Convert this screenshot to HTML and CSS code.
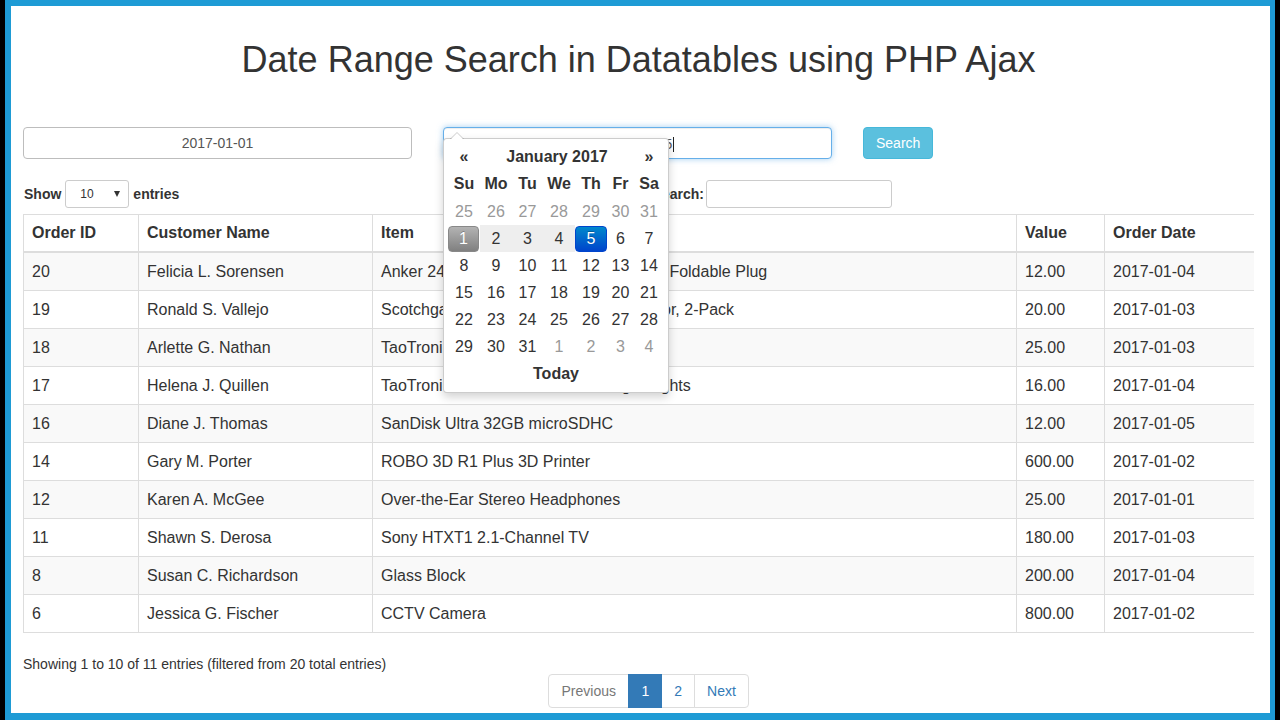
FILE: index.html
```html
<!DOCTYPE html>
<html lang="en">
<head>
<meta charset="utf-8">
<title>Date Range Search in Datatables using PHP Ajax</title>
<link rel="stylesheet" href="styles.css">
</head>
<body>
<div class="frame">
  <div class="page">
    <h1 class="title">Date Range Search in Datatables using PHP Ajax</h1>

    <div class="range-row">
      <input class="field" type="text" value="2017-01-01">
      <div class="picker-wrap">
        <div class="field field-focus"><span>2017-01-05</span><span class="caret"></span></div>
        <div class="datepicker">
          <table class="cal">
            <colgroup>
              <col class="c32"><col class="c32"><col class="c31"><col class="c32"><col class="c32"><col class="c27"><col class="c30">
            </colgroup>
            <thead>
              <tr class="cal-head">
                <th class="nav">«</th>
                <th colspan="5" class="month">January 2017</th>
                <th class="nav">»</th>
              </tr>
              <tr class="cal-dow">
                <th>Su</th><th>Mo</th><th>Tu</th><th>We</th><th>Th</th><th>Fr</th><th>Sa</th>
              </tr>
            </thead>
            <tbody>
              <tr><td class="old">25</td><td class="old">26</td><td class="old">27</td><td class="old">28</td><td class="old">29</td><td class="old">30</td><td class="old">31</td></tr>
              <tr><td class="sel"><span>1</span></td><td class="range">2</td><td class="range">3</td><td class="range">4</td><td class="active"><span>5</span></td><td>6</td><td>7</td></tr>
              <tr><td>8</td><td>9</td><td>10</td><td>11</td><td>12</td><td>13</td><td>14</td></tr>
              <tr><td>15</td><td>16</td><td>17</td><td>18</td><td>19</td><td>20</td><td>21</td></tr>
              <tr><td>22</td><td>23</td><td>24</td><td>25</td><td>26</td><td>27</td><td>28</td></tr>
              <tr><td>29</td><td>30</td><td>31</td><td class="old">1</td><td class="old">2</td><td class="old">3</td><td class="old">4</td></tr>
            </tbody>
            <tfoot>
              <tr class="cal-foot"><th colspan="7">Today</th></tr>
            </tfoot>
          </table>
        </div>
      </div>
      <button class="btn-search" type="button">Search</button>
    </div>

    <div class="dt-controls">
      <label class="dt-length">Show <span class="select"><span>10</span><span class="arrow"></span></span> entries</label>
      <label class="dt-filter">Search:<input class="filter-input" type="search"></label>
    </div>

    <table class="data">
      <colgroup>
        <col class="w-id"><col class="w-name"><col class="w-item"><col class="w-value"><col class="w-date">
      </colgroup>
      <thead>
        <tr><th>Order ID</th><th>Customer Name</th><th>Item</th><th>Value</th><th>Order Date</th></tr>
      </thead>
      <tbody>
        <tr><td>20</td><td>Felicia L. Sorensen</td><td>Anker 24W Dual USB Wall Charger with Foldable Plug</td><td>12.00</td><td>2017-01-04</td></tr>
        <tr><td>19</td><td>Ronald S. Vallejo</td><td>Scotchgard Fabric &amp; Upholstery Protector, 2-Pack</td><td>20.00</td><td>2017-01-03</td></tr>
        <tr><td>18</td><td>Arlette G. Nathan</td><td>TaoTronics Bluetooth Sport Headphones</td><td>25.00</td><td>2017-01-03</td></tr>
        <tr><td>17</td><td>Helena J. Quillen</td><td>TaoTronics Motion Sensor LED Night Lights</td><td>16.00</td><td>2017-01-04</td></tr>
        <tr><td>16</td><td>Diane J. Thomas</td><td>SanDisk Ultra 32GB microSDHC</td><td>12.00</td><td>2017-01-05</td></tr>
        <tr><td>14</td><td>Gary M. Porter</td><td>ROBO 3D R1 Plus 3D Printer</td><td>600.00</td><td>2017-01-02</td></tr>
        <tr><td>12</td><td>Karen A. McGee</td><td>Over-the-Ear Stereo Headphones</td><td>25.00</td><td>2017-01-01</td></tr>
        <tr><td>11</td><td>Shawn S. Derosa</td><td>Sony HTXT1 2.1-Channel TV</td><td>180.00</td><td>2017-01-03</td></tr>
        <tr><td>8</td><td>Susan C. Richardson</td><td>Glass Block</td><td>200.00</td><td>2017-01-04</td></tr>
        <tr><td>6</td><td>Jessica G. Fischer</td><td>CCTV Camera</td><td>800.00</td><td>2017-01-02</td></tr>
      </tbody>
    </table>

    <div class="dt-info">Showing 1 to 10 of 11 entries (filtered from 20 total entries)</div>

    <ul class="pagination">
      <li class="disabled"><a>Previous</a></li>
      <li class="current"><a>1</a></li>
      <li><a>2</a></li>
      <li><a>Next</a></li>
    </ul>
  </div>
</div>
</body>
</html>
```

FILE: styles.css
```css
html, body {
  margin: 0;
  padding: 0;
  background: #000;
}

body {
  font-family: "Liberation Sans", Arial, sans-serif;
  font-size: 14px;
  line-height: 20px;
  color: #333;
}

.frame {
  margin: 0 5px;
  width: 1270px;
  height: 720px;
  box-sizing: border-box;
  border-style: solid;
  border-color: #1e9bd5;
  border-width: 6px 5px 7px 6px;
  background: #fff;
  overflow: hidden;
}

.page {
  padding-top: 34px;
}

.title {
  margin: 0;
  padding-right: 4px;
  font-size: 36px;
  line-height: 40px;
  font-weight: normal;
  text-align: center;
  color: #333;
}

/* date range row */
.range-row {
  display: flex;
  gap: 31px;
  margin: 47px 0 0 12px;
}

.field {
  width: 389px;
  height: 32px;
  box-sizing: border-box;
  border: 1px solid #bdbdbd;
  border-radius: 4px;
  padding: 5px 12px;
  font-family: "Liberation Sans", Arial, sans-serif;
  font-size: 14px;
  line-height: 20px;
  color: #555;
  text-align: center;
  background: #fff;
}

.field-focus {
  border-color: #66afe9;
  box-shadow: inset 0 1px 1px rgba(0,0,0,.075), 0 0 6px rgba(102,175,233,.6);
  display: flex;
  justify-content: center;
  align-items: center;
  padding-top: 7px;
}

.caret {
  display: inline-block;
  width: 1px;
  height: 15px;
  background: #222;
  margin-left: 1px;
}

.picker-wrap {
  position: relative;
}

.btn-search {
  height: 32px;
  padding: 0 12px;
  border: 1px solid #46b8da;
  border-radius: 4px;
  background: #5bc0de;
  color: #fff;
  font-family: "Liberation Sans", Arial, sans-serif;
  font-size: 14px;
}

/* datepicker */
.datepicker {
  position: absolute;
  left: 0;
  top: 11px;
  z-index: 10;
  width: 226px;
  box-sizing: border-box;
  padding: 4px;
  background: #fff;
  border: 1px solid rgba(0,0,0,.2);
  border-radius: 4px;
  box-shadow: 0 4px 10px rgba(0,0,0,.18);
}

.datepicker::before {
  content: "";
  position: absolute;
  top: -7px;
  left: 6px;
  border-left: 7px solid transparent;
  border-right: 7px solid transparent;
  border-bottom: 7px solid rgba(0,0,0,.2);
}

.datepicker::after {
  content: "";
  position: absolute;
  top: -6px;
  left: 7px;
  border-left: 6px solid transparent;
  border-right: 6px solid transparent;
  border-bottom: 6px solid #fff;
}

.cal {
  width: 216px;
  table-layout: fixed;
  border-collapse: separate;
  border-spacing: 0;
  font-size: 16px;
  line-height: 20px;
  color: #333;
}

.c32 { width: 32px; }
.c31 { width: 31px; }
.c27 { width: 27px; }
.c30 { width: 30px; }

.cal th,
.cal td {
  padding: 0;
  text-align: center;
}

.cal-head th { height: 27px; font-weight: bold; }
.cal-dow th { height: 28px; font-weight: bold; }
.cal td { height: 27px; }
.cal-foot th { height: 28px; font-weight: bold; }

.cal td.old { color: #999; }

.cal td.range { background: #eee; }

.cal td.sel span,
.cal td.active span {
  display: block;
  margin-top: 1px;
  border-radius: 4px;
  color: #fff;
  text-shadow: 0 -1px 0 rgba(0,0,0,.25);
  line-height: 24px;
  height: 24px;
}

.cal td.sel span {
  background: linear-gradient(#b3b3b3, #808080);
  border: 1px solid #888;
  margin-right: 1px;
}

.cal td.active span {
  background: linear-gradient(#0088cc, #0044cc);
  border: 1px solid #0044cc;
}

/* datatables controls */
.dt-controls {
  display: flex;
  justify-content: space-between;
  align-items: center;
  width: 868px;
  height: 28px;
  margin: 21px 0 0 13px;
}

.dt-length,
.dt-filter {
  display: flex;
  align-items: center;
  font-weight: bold;
  font-size: 14px;
}

.select {
  display: inline-flex;
  align-items: center;
  justify-content: space-between;
  width: 64px;
  height: 28px;
  box-sizing: border-box;
  margin: 0 4px;
  padding: 0 8px 0 14px;
  border: 1px solid #ccc;
  border-radius: 3px;
  font-size: 12px;
  font-weight: normal;
  color: #333;
}

.arrow {
  width: 0;
  height: 0;
  border-left: 3.5px solid transparent;
  border-right: 3.5px solid transparent;
  border-top: 6px solid #333;
}

.filter-input {
  width: 186px;
  height: 28px;
  box-sizing: border-box;
  margin-left: 2px;
  border: 1px solid #ccc;
  border-radius: 3px;
}

/* data table */
.data {
  width: 1231px;
  margin: 6px 0 0 12px;
  table-layout: fixed;
  border-collapse: separate;
  border-spacing: 0;
  font-size: 16px;
  color: #333;
  border-top: 1px solid #ddd;
}

.w-id { width: 115px; }
.w-name { width: 234px; }
.w-item { width: 644px; }
.w-value { width: 88px; }
.w-date { width: 150px; }

.data th,
.data td {
  text-align: left;
  padding: 8px;
  border-left: 1px solid #ddd;
  white-space: nowrap;
  overflow: hidden;
}

.data th {
  font-weight: bold;
  line-height: 20px;
  border-bottom: 2px solid #ddd;
}

.data td {
  line-height: 21px;
  border-bottom: 1px solid #ddd;
}

.data tbody tr:nth-child(odd) td {
  background: #f9f9f9;
}

/* footer */
.dt-info {
  margin: 22px 0 0 12px;
  font-size: 14px;
  line-height: 19px;
  color: #333;
}

.pagination {
  display: flex;
  list-style: none;
  margin: 0 0 0 537px;
  padding: 0;
}

.pagination li a {
  display: block;
  padding: 6px 12px;
  line-height: 20px;
  font-size: 14px;
  color: #337ab7;
  background: #fff;
  border: 1px solid #ddd;
  margin-left: -1px;
}

.pagination li:first-child a {
  margin-left: 0;
  padding: 6px 12.5px;
  border-radius: 4px 0 0 4px;
}

.pagination li:last-child a {
  border-radius: 0 4px 4px 0;
}

.pagination li.disabled a {
  color: #777;
}

.pagination li.current a {
  background: #337ab7;
  border-color: #337ab7;
  color: #fff;
  position: relative;
}
```
